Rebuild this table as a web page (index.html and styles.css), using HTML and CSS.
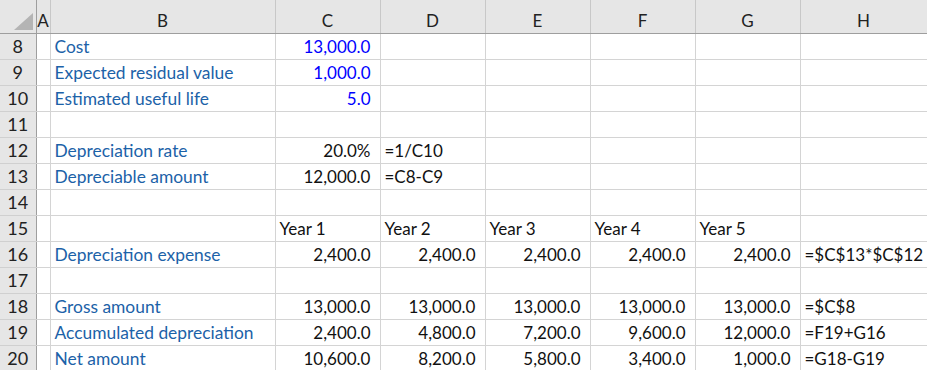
FILE: index.html
```html
<!DOCTYPE html>
<html lang="en">
<head>
    <meta charset="UTF-8">
    <title>Depreciation</title>
    <link rel="stylesheet" href="styles.css">
</head>
<body>
    <table class="sheet">
        <colgroup>
            <col class="col-rowhead">
            <col class="col-a">
            <col class="col-b">
            <col class="col-num">
            <col class="col-num">
            <col class="col-num">
            <col class="col-num">
            <col class="col-num">
            <col class="col-h">
        </colgroup>
        <thead>
            <tr class="col-heads">
                <th class="corner"><span class="corner-tri"></span></th>
                <th>A</th>
                <th>B</th>
                <th>C</th>
                <th>D</th>
                <th>E</th>
                <th>F</th>
                <th>G</th>
                <th>H</th>
            </tr>
        </thead>
        <tbody>
            <tr>
                <th>8</th><td></td><td class="label">Cost</td>
                <td class="num input">13,000.0</td><td></td><td></td><td></td><td></td><td></td>
            </tr>
            <tr>
                <th>9</th><td></td><td class="label">Expected residual value</td>
                <td class="num input">1,000.0</td><td></td><td></td><td></td><td></td><td></td>
            </tr>
            <tr>
                <th>10</th><td></td><td class="label">Estimated useful life</td>
                <td class="num input">5.0</td><td></td><td></td><td></td><td></td><td></td>
            </tr>
            <tr>
                <th>11</th><td></td><td></td><td></td><td></td><td></td><td></td><td></td><td></td>
            </tr>
            <tr>
                <th>12</th><td></td><td class="label">Depreciation rate</td>
                <td class="num">20.0%</td><td class="formula">=1/C10</td><td></td><td></td><td></td><td></td>
            </tr>
            <tr>
                <th>13</th><td></td><td class="label">Depreciable amount</td>
                <td class="num">12,000.0</td><td class="formula">=C8-C9</td><td></td><td></td><td></td><td></td>
            </tr>
            <tr>
                <th>14</th><td></td><td></td><td></td><td></td><td></td><td></td><td></td><td></td>
            </tr>
            <tr>
                <th>15</th><td></td><td></td>
                <td class="text">Year 1</td><td class="text">Year 2</td><td class="text">Year 3</td>
                <td class="text">Year 4</td><td class="text">Year 5</td><td></td>
            </tr>
            <tr>
                <th>16</th><td></td><td class="label">Depreciation expense</td>
                <td class="num">2,400.0</td><td class="num">2,400.0</td><td class="num">2,400.0</td>
                <td class="num">2,400.0</td><td class="num">2,400.0</td><td class="formula">=$C$13*$C$12</td>
            </tr>
            <tr>
                <th>17</th><td></td><td></td><td></td><td></td><td></td><td></td><td></td><td></td>
            </tr>
            <tr>
                <th>18</th><td></td><td class="label">Gross amount</td>
                <td class="num">13,000.0</td><td class="num">13,000.0</td><td class="num">13,000.0</td>
                <td class="num">13,000.0</td><td class="num">13,000.0</td><td class="formula">=$C$8</td>
            </tr>
            <tr>
                <th>19</th><td></td><td class="label">Accumulated depreciation</td>
                <td class="num">2,400.0</td><td class="num">4,800.0</td><td class="num">7,200.0</td>
                <td class="num">9,600.0</td><td class="num">12,000.0</td><td class="formula">=F19+G16</td>
            </tr>
            <tr>
                <th>20</th><td></td><td class="label">Net amount</td>
                <td class="num">10,600.0</td><td class="num">8,200.0</td><td class="num">5,800.0</td>
                <td class="num">3,400.0</td><td class="num">1,000.0</td><td class="formula">=G18-G19</td>
            </tr>
        </tbody>
    </table>
</body>
</html>
```

FILE: styles.css
```css
* {
    margin: 0;
    padding: 0;
    box-sizing: border-box;
}

body {
    font-family: Lato, "Liberation Sans", sans-serif;
    font-size: 17px;
    color: #111;
    background-color: #ffffff;
    overflow: hidden;
}

.sheet {
    border-collapse: collapse;
    table-layout: fixed;
    width: 927px;
}

.col-rowhead { width: 36px; }
.col-a { width: 14px; }
.col-b { width: 225px; }
.col-num { width: 105px; }
.col-h { width: 127px; }

.sheet td {
    height: 26px;
    border: 1px solid #d4d4d4;
    padding: 0 4px;
    white-space: nowrap;
    overflow: hidden;
}

/* column letters */
.col-heads th {
    height: 33px;
    background-color: #e6e6e6;
    font-weight: normal;
    color: #222;
    padding-top: 9px;
    border-bottom: 1px solid #9e9e9e;
    border-right: 1px solid #c8c8c8;
    text-align: center;
}

.col-heads th.corner {
    position: relative;
    border-right: 1px solid #9e9e9e;
}

.corner-tri {
    position: absolute;
    right: 3px;
    bottom: 3px;
    width: 0;
    height: 0;
    border-left: 19px solid transparent;
    border-bottom: 17px solid #b4b4b4;
}

/* row numbers */
tbody th {
    background-color: #e6e6e6;
    font-weight: normal;
    font-size: 18px;
    color: #222;
    text-align: center;
    border-right: 1px solid #9e9e9e;
    border-bottom: 1px solid #d0d0d0;
}

.label {
    color: #1c62a8;
    font-size: 17.4px;
}

.num {
    text-align: right;
    padding-right: 9px !important;
}

.input {
    color: #0000ff;
}
```
